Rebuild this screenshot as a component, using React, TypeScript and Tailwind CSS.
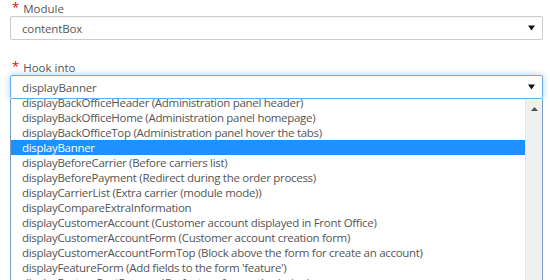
import React from "react";

const hooks = [
  "displayBackOfficeHeader (Administration panel header)",
  "displayBackOfficeHome (Administration panel homepage)",
  "displayBackOfficeTop (Administration panel hover the tabs)",
  "displayBanner",
  "displayBeforeCarrier (Before carriers list)",
  "displayBeforePayment (Redirect during the order process)",
  "displayCarrierList (Extra carrier (module mode))",
  "displayCompareExtraInformation",
  "displayCustomerAccount (Customer account displayed in Front Office)",
  "displayCustomerAccountForm (Customer account creation form)",
  "displayCustomerAccountFormTop (Block above the form for create an account)",
  "displayFeatureForm (Add fields to the form 'feature')",
  "displayFeaturePostProcess (On feature form submission)",
];

function Caret() {
  return (
    <svg width="7" height="6" viewBox="0 0 7 6" className="shrink-0">
      <path d="M0 0.5 H7 L3.5 5.5 Z" fill="#111" />
    </svg>
  );
}

function Label({ text }: { text: string }) {
  return (
    <div className="h-4 leading-4 text-[11.5px] text-[#555] pl-[2px]">
      <span className="text-[#e00] text-[13px] mr-[4px] relative top-[-1px]">*</span>
      {text}
    </div>
  );
}

function App() {
  return (
    <div
      className="w-[550px] h-[280px] overflow-hidden bg-white pl-[10px]"
      style={{ fontFamily: '"Open Sans", "DejaVu Sans", sans-serif' }}
    >
      <Label text="Module" />
      <div className="w-[533px] h-6 border border-[#ccc] rounded-[2px] flex items-center pl-[11px] pr-[7px] text-[11.5px] tracking-[-0.15px] text-[#555] shadow-[inset_0_1px_1px_rgba(0,0,0,0.04)]">
        <span className="flex-1 pt-[1px]">contentBox</span>
        <Caret />
      </div>

      <div className="h-[19px]" />
      <Label text="Hook into" />
      <div className="w-[533px] h-6 border border-[#66afe9] rounded-[2px] flex items-center pl-[11px] pr-[7px] text-[11.5px] tracking-[-0.15px] text-[#555] shadow-[0_0_6px_rgba(102,175,233,0.6)]">
        <span className="flex-1 pt-[1px]">displayBanner</span>
        <Caret />
      </div>

      <div className="w-[533px] h-[200px] border-x border-[#7a9ec9] flex overflow-hidden bg-white">
        <ul className="flex-1 mt-[-4px]">
          {hooks.map((h) => (
            <li
              key={h}
              className={`h-[15px] leading-[15px] text-[11.5px] tracking-[-0.3px] pl-[11px] whitespace-nowrap ${
                h === "displayBanner" ? "bg-[#1e90ff] text-white" : "text-[#555]"
              }`}
            >
              {h}
            </li>
          ))}
        </ul>
        <div className="w-[17px] bg-[#f0f0f0] border-l border-[#e6e6e6] flex justify-center pt-[8px]">
          <svg width="7" height="4" viewBox="0 0 7 4">
            <path d="M0 4 H7 L3.5 0 Z" fill="#505050" />
          </svg>
        </div>
      </div>
    </div>
  );
}

export default App;
